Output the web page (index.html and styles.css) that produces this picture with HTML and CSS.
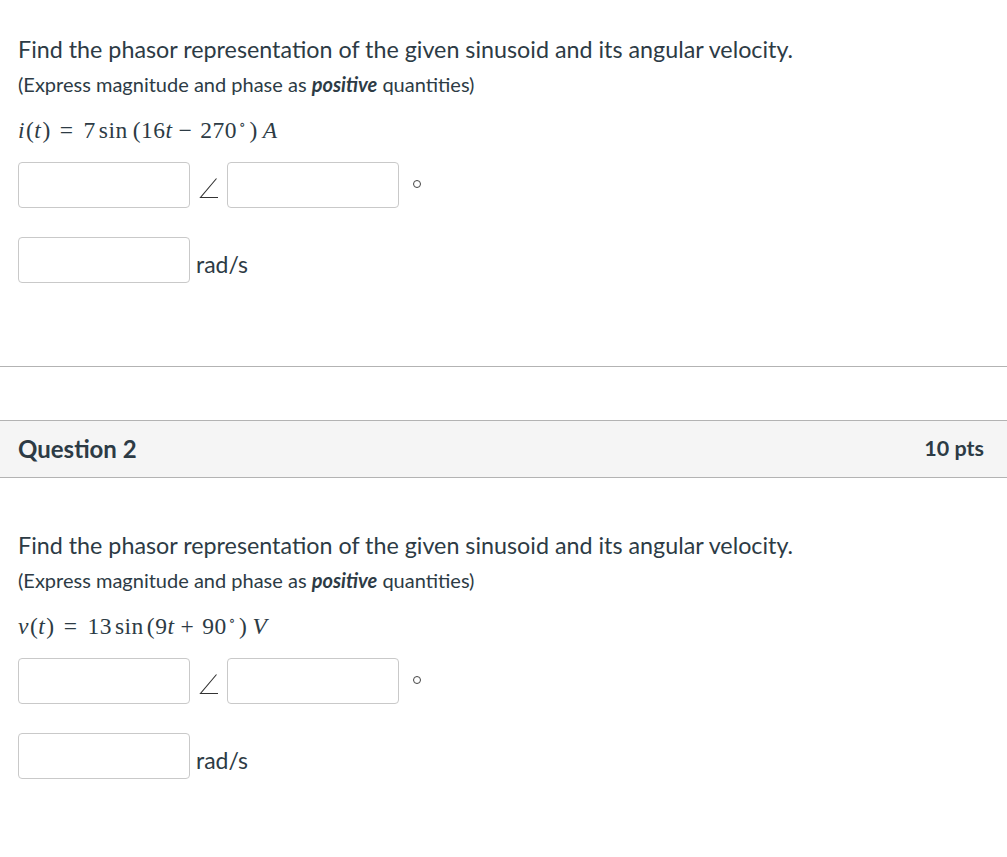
FILE: index.html
```html
<!DOCTYPE html>
<html>
<head>
<meta charset="utf-8">
<link rel="stylesheet" href="styles.css">
</head>
<body>
<div class="quiz">
  <section class="question q1">
    <div class="q-body">
      <p class="q-text">Find the phasor representation of the given sinusoid and its angular velocity.</p>
      <p class="q-note">(Express magnitude and phase as <strong><em>positive</em></strong> quantities)</p>
      <p class="math"><span class="mi">i</span>(<span class="mi">t</span>)<span class="rel">=</span>7<span class="op">sin</span><span class="sp">(</span>16<span class="mi">t</span><span class="bin">−</span>270<span class="deg">∘</span>)<span class="mi unit">A</span></p>
      <div class="answer-row">
        <input class="ans" type="text" aria-label="magnitude">
        <span class="angle"><svg width="20" height="22" viewBox="0 0 20 22"><path d="M17.5 1.5 L1.5 20.5 L19 20.5" fill="none" stroke="#333" stroke-width="1.1"/></svg></span>
        <input class="ans" type="text" aria-label="phase">
        <span class="degree"></span>
      </div>
      <div class="answer-row second">
        <input class="ans" type="text" aria-label="angular velocity">
        <span class="unit-label">rad/s</span>
      </div>
    </div>
  </section>
  <hr class="sep">
  <section class="question q2">
    <header class="q-header">
      <h2 class="q-title">Question 2</h2>
      <span class="q-pts">10 pts</span>
    </header>
    <div class="q-body">
      <p class="q-text">Find the phasor representation of the given sinusoid and its angular velocity.</p>
      <p class="q-note">(Express magnitude and phase as <strong><em>positive</em></strong> quantities)</p>
      <p class="math"><span class="mi">v</span>(<span class="mi">t</span>)<span class="rel">=</span>13<span class="op">sin</span>(9<span class="mi">t</span><span class="bin">+</span>90<span class="deg">∘</span>)<span class="mi unit">V</span></p>
      <div class="answer-row">
        <input class="ans" type="text" aria-label="magnitude">
        <span class="angle"><svg width="20" height="22" viewBox="0 0 20 22"><path d="M17.5 1.5 L1.5 20.5 L19 20.5" fill="none" stroke="#333" stroke-width="1.1"/></svg></span>
        <input class="ans" type="text" aria-label="phase">
        <span class="degree"></span>
      </div>
      <div class="answer-row second">
        <input class="ans" type="text" aria-label="angular velocity">
        <span class="unit-label">rad/s</span>
      </div>
    </div>
  </section>
</div>
</body>
</html>
```

FILE: styles.css
```css
html, body {
  margin: 0;
  padding: 0;
  background: #ffffff;
}

body {
  font-family: Lato, "Open Sans", sans-serif;
  color: #2d3b45;
}

.quiz {
  width: 1007px;
}

.q-body {
  padding: 0 18px;
}

.q1 .q-body {
  padding-top: 34px;
}

.q2 .q-body {
  padding-top: 52px;
}

.q-text {
  margin: 0;
  font-size: 23.3px;
  line-height: 30px;
}

.q-note {
  margin: 7px 0 0;
  font-size: 20px;
  line-height: 26px;
}

.q-note strong {
  font-weight: 700;
}

.math {
  margin: 18px 0 0;
  height: 30px;
  font-family: "Liberation Serif", "DejaVu Serif", serif;
  font-size: 23.5px;
  letter-spacing: 0.5px;
  line-height: 30px;
  color: #2d3b45;
  white-space: nowrap;
}

.math .mi {
  font-style: italic;
  padding-right: 1px;
}

.math .rel {
  margin: 0 10px 0 9px;
}

.math .bin {
  margin: 0 8px 0 5px;
}

.math .op {
  margin: 0 3px 0 3px;
}

.math .sp {
  margin-left: 2px;
}

.math .deg {
  font-size: 14px;
  line-height: 0;
  vertical-align: 9px;
  margin: 0 3px 0 2px;
}

.math .unit {
  margin-left: 5px;
}

.answer-row {
  display: flex;
  align-items: center;
  margin-top: 17px;
  height: 46px;
}

.answer-row.second {
  margin-top: 29px;
  align-items: flex-end;
}

.ans {
  box-sizing: border-box;
  width: 172px;
  height: 46px;
  margin: 0;
  border: 1px solid #c9c9c9;
  border-radius: 4px;
  background: #fff;
  font-family: Lato, sans-serif;
  font-size: 16px;
  padding: 0 10px;
}

.angle {
  display: flex;
  width: 37px;
  justify-content: center;
  padding-top: 6px;
}

.degree {
  box-sizing: border-box;
  width: 8px;
  height: 8px;
  border: 1px solid #444;
  border-radius: 50%;
  margin-left: 14px;
  margin-top: -3px;
}

.unit-label {
  font-size: 23px;
  line-height: 26px;
  margin-left: 6px;
  padding-bottom: 6px;
}

.sep {
  margin: 83px 0 0;
  border: 0;
  border-top: 1px solid #b3b3b3;
  height: 0;
}

.q2 {
  margin-top: 53px;
}

.q-header {
  display: flex;
  justify-content: space-between;
  align-items: center;
  box-sizing: border-box;
  height: 58px;
  padding: 0 23px 2px 18px;
  background: #f5f5f5;
  border-top: 1px solid #b3b3b3;
  border-bottom: 1px solid #b3b3b3;
}

.q-title {
  margin: 0;
  font-size: 24px;
  font-weight: 700;
  color: #2d3b45;
}

.q-pts {
  font-size: 21.5px;
  font-weight: 700;
  color: #2d3b45;
}
```
